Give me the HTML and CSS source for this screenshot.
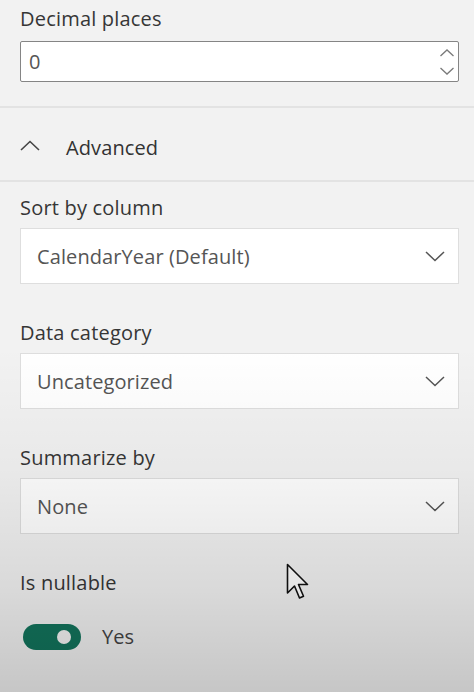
FILE: index.html
```html
<!DOCTYPE html>
<html>
<head>
<meta charset="utf-8">
<link rel="stylesheet" href="styles.css">
</head>
<body>
<div class="pane">
  <section class="section first">
    <div class="label">Decimal places</div>
    <div class="numinput">
      <span class="value">0</span>
      <span class="spinner">
        <svg width="16" height="28" viewBox="0 0 16 28"><path d="M1.5 8 L8 2 L14.5 8" fill="none" stroke="#7a7a7a" stroke-width="1.3"/><path d="M1.5 20 L8 26 L14.5 20" fill="none" stroke="#7a7a7a" stroke-width="1.3"/></svg>
      </span>
    </div>
  </section>
  <div class="adv">
    <svg class="adv-chev" width="20" height="11" viewBox="0 0 20 11"><path d="M1 10 L10 1.5 L19 10" fill="none" stroke="#444" stroke-width="1.6"/></svg>
    <span class="adv-text">Advanced</span>
  </div>
  <section class="section fields">
    <div class="field">
      <div class="label">Sort by column</div>
      <div class="dropdown"><span class="dd-text">CalendarYear (Default)</span>
        <svg class="dd-chev" width="20" height="11" viewBox="0 0 20 11"><path d="M1 1 L10 9.5 L19 1" fill="none" stroke="#555" stroke-width="1.5"/></svg></div>
    </div>
    <div class="field">
      <div class="label">Data category</div>
      <div class="dropdown"><span class="dd-text">Uncategorized</span>
        <svg class="dd-chev" width="20" height="11" viewBox="0 0 20 11"><path d="M1 1 L10 9.5 L19 1" fill="none" stroke="#555" stroke-width="1.5"/></svg></div>
    </div>
    <div class="field">
      <div class="label">Summarize by</div>
      <div class="dropdown"><span class="dd-text">None</span>
        <svg class="dd-chev" width="20" height="11" viewBox="0 0 20 11"><path d="M1 1 L10 9.5 L19 1" fill="none" stroke="#555" stroke-width="1.5"/></svg></div>
    </div>
    <div class="field">
      <div class="label">Is nullable</div>
      <div class="toggle-row">
        <span class="toggle"><span class="knob"></span></span>
        <span class="toggle-text">Yes</span>
      </div>
    </div>
  </section>
</div>
<svg class="cursor" width="24" height="38" viewBox="0 0 24 38"><path d="M1.5 1.5 L1.5 30 L8.5 23 L13.5 35 L17.5 33.2 L12.5 21.5 L21.5 21.5 Z" fill="#fff" stroke="#111" stroke-width="1.6" stroke-linejoin="round"/></svg>
<div class="shade"></div>
</body>
</html>
```

FILE: styles.css
```css
html, body {
  margin: 0;
  padding: 0;
}
body {
  width: 474px;
  height: 692px;
  overflow: hidden;
  background: #f2f2f2;
  font-family: "Open Sans", "Noto Sans", sans-serif;
  color: #333;
  position: relative;
}
.pane {
  display: flex;
  flex-direction: column;
}
.section {
  padding: 0 15px 0 20px;
}
.first {
  padding-top: 7px;
  padding-bottom: 24px;
  border-bottom: 2px solid #e3e3e3;
}
.label {
  font-size: 20px;
  line-height: 24px;
  height: 24px;
  color: #363636;
  letter-spacing: 0.2px;
}
.first .label {
  margin-bottom: 10px;
}
.numinput {
  height: 39px;
  background: #fff;
  border: 1px solid #858585;
  border-radius: 2px;
  display: flex;
  align-items: center;
  justify-content: space-between;
  padding: 0 3px 0 8px;
}
.value {
  font-size: 20px;
  color: #555;
}
.spinner {
  display: flex;
  align-items: center;
}
.adv {
  height: 72px;
  display: flex;
  align-items: center;
  padding-left: 20px;
  border-bottom: 2px solid #e3e3e3;
}
.adv-chev {
  margin-top: 2px;
}
.adv-text {
  margin-left: 26px;
  margin-top: 7px;
  font-size: 20px;
  color: #333;
  letter-spacing: 0.1px;
}
.fields {
  padding-top: 14px;
  display: flex;
  flex-direction: column;
  gap: 37px;
}
.field .label {
  margin-bottom: 8px;
}
.dropdown {
  height: 54px;
  background: #fff;
  border: 1px solid #dedede;
  display: flex;
  align-items: center;
  justify-content: space-between;
  padding: 0 13px 0 16px;
}
.dd-text {
  font-size: 20px;
  color: #555;
  letter-spacing: 0.1px;
}
.toggle-row {
  display: flex;
  align-items: center;
  margin-top: 28px;
  padding-left: 3px;
}
.toggle {
  width: 58px;
  height: 26px;
  border-radius: 13px;
  background: #12745c;
  display: flex;
  align-items: center;
  justify-content: flex-end;
  padding-right: 10px;
  box-sizing: border-box;
}
.knob {
  width: 14px;
  height: 14px;
  border-radius: 50%;
  background: #f4f4f4;
}
.toggle-text {
  margin-left: 21px;
  font-size: 20px;
  color: #444;
}
.cursor {
  position: absolute;
  left: 286px;
  top: 563px;
}
.shade {
  position: absolute;
  inset: 0;
  pointer-events: none;
  background: linear-gradient(to bottom, rgba(0,0,0,0) 0%, rgba(0,0,0,0) 50%, rgba(0,0,0,0.04) 68%, rgba(0,0,0,0.1) 85%, rgba(0,0,0,0.18) 100%);
}
```
